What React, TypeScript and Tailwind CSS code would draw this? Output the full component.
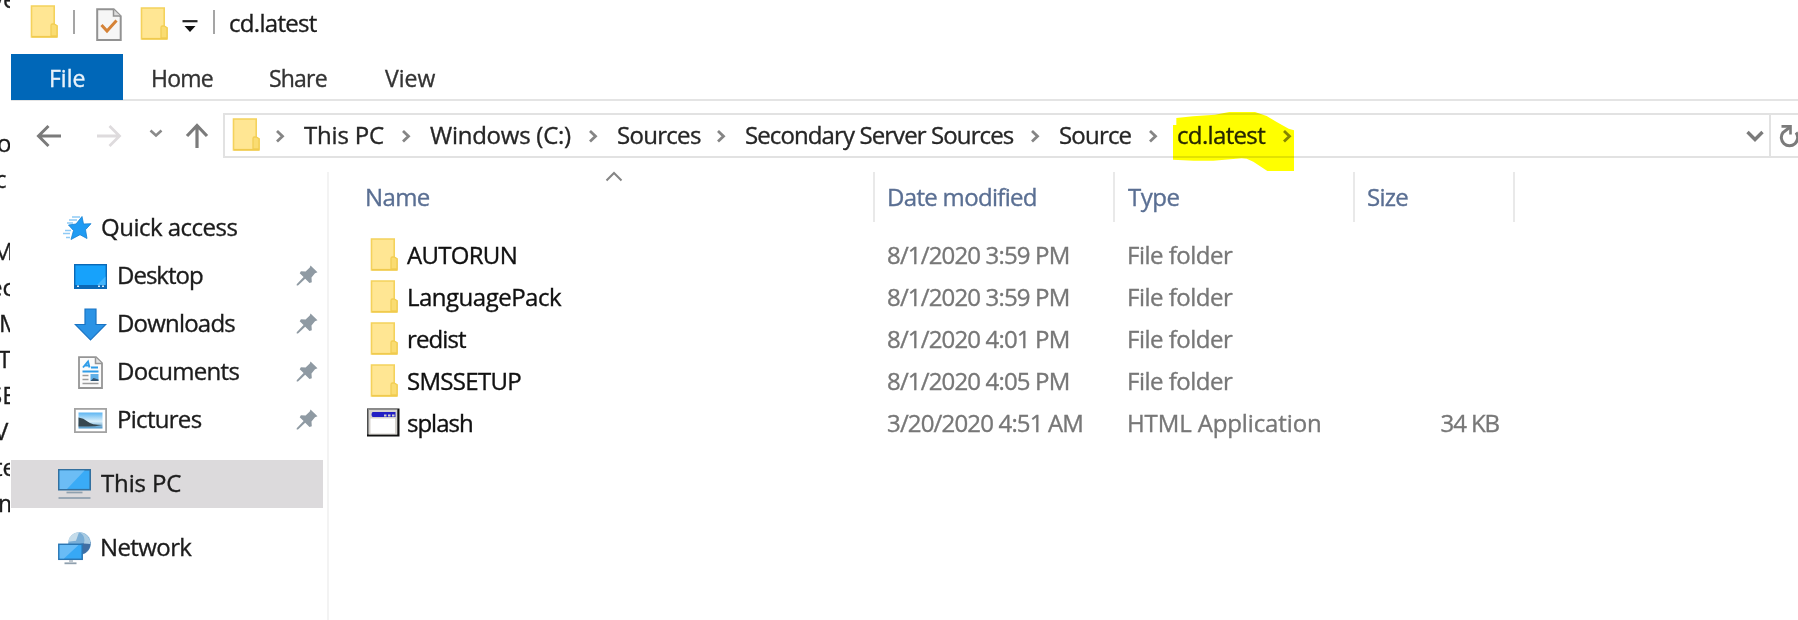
import React from 'react';

interface Crumb {
  label: string;
  className: string;
}

interface FileRow {
  name: string;
  nameClass: string;
  date: string;
  dateClass: string;
  type: string;
  typeClass: string;
  size?: string;
  folder: boolean;
}

const crumbs: Crumb[] = [
  { label: 'This PC', className: 'w-[98px] tracking-[-0.2px]' },
  { label: 'Windows (C:)', className: 'w-[159px] tracking-[-0.25px]' },
  { label: 'Sources', className: 'w-[100px] tracking-[-0.7px]' },
  { label: 'Secondary Server Sources', className: 'w-[286px] tracking-[-0.9px]' },
  { label: 'Source', className: 'w-[90px] tracking-[-0.8px]' },
];

const files: FileRow[] = [
  { name: 'AUTORUN', nameClass: 'tracking-[-0.7px]', date: '8/1/2020 3:59 PM', dateClass: 'tracking-[-0.84px]', type: 'File folder', typeClass: 'tracking-[-0.5px]', folder: true },
  { name: 'LanguagePack', nameClass: 'tracking-[-0.5px]', date: '8/1/2020 3:59 PM', dateClass: 'tracking-[-0.84px]', type: 'File folder', typeClass: 'tracking-[-0.5px]', folder: true },
  { name: 'redist', nameClass: 'tracking-[-0.9px]', date: '8/1/2020 4:01 PM', dateClass: 'tracking-[-0.84px]', type: 'File folder', typeClass: 'tracking-[-0.5px]', folder: true },
  { name: 'SMSSETUP', nameClass: 'tracking-[-0.7px]', date: '8/1/2020 4:05 PM', dateClass: 'tracking-[-0.84px]', type: 'File folder', typeClass: 'tracking-[-0.5px]', folder: true },
  { name: 'splash', nameClass: 'tracking-[-1px]', date: '3/20/2020 4:51 AM', dateClass: 'tracking-[-0.84px]', type: 'HTML Application', typeClass: 'tracking-[-0.12px]', size: '34 KB', folder: false },
];

// Letters of the window that lies behind, cut off by the explorer's edge
const behind = [
  { text: 've', className: '-ml-[9px]' },
  { text: '', className: '' },
  { text: '', className: '' },
  { text: '', className: '' },
  { text: 'o', className: '-ml-[3px]' },
  { text: 'c', className: '-ml-[5px]' },
  { text: '', className: '' },
  { text: 'M', className: '-ml-[8px]' },
  { text: 'ec', className: '-ml-[11px]' },
  { text: 'M', className: '-ml-[1px]' },
  { text: 'T', className: '-ml-[2px]' },
  { text: 'SE', className: '-ml-[11px]' },
  { text: 'V', className: '-ml-[6px]' },
  { text: 'te', className: '-ml-[6px]' },
  { text: 'm', className: '-ml-[2px]' },
];

const FolderIcon = () => (
  <svg width="28" height="33" viewBox="0 0 28 33" className="shrink-0">
    <path d="M1.5 1h22.7v18.5l2.8 1.5v11H1.5z" fill="#ffe693" stroke="#f4d25c" strokeWidth="1.6" />
    <path d="M21 31V20.500q0-1.500 1.500-1.500h1.700l2.800 1.800V31z" fill="#fadc72" stroke="#f2ce55" strokeWidth="1.300" />
    <path d="M2 31.700h25" stroke="#f0ca4e" strokeWidth="1.600" />
  </svg>
);

const WindowIcon = () => (
  <svg width="33" height="29" viewBox="0 0 33 29" className="shrink-0">
    <rect x="0" y="0.500" width="32.500" height="28" fill="#111" />
    <rect x="0.500" y="0.500" width="30" height="26" fill="#8c8c8c" />
    <rect x="2" y="2" width="28" height="24.500" fill="#d6d3ce" />
    <path d="M5.500 4h23v5h-23q-2-2.500 0-5z" fill="#2320c4" />
    <path d="M17 7.500h2.500M21 7.500h2.500M25 7.500h2.500" stroke="#d6d3ce" strokeWidth="2" />
    <rect x="3.500" y="10.500" width="24.500" height="15" fill="#fff" />
  </svg>
);

const Chevron = () => (
  <svg width="28" height="16" viewBox="0 0 28 16" className="shrink-0">
    <path d="M1 3l5.500 5.200L1 13.400" fill="none" stroke="#858585" strokeWidth="2.800" />
  </svg>
);

const Pin = () => (
  <svg width="22" height="22" viewBox="0 0 22 22" className="shrink-0">
    <path d="M14.500 0.500l7 6.800-2.500 1-3.500 4.200 0.300 4.700-2.300 0.800-4.300-4.300-7.200 6.800H0.700v-1.200l6.900-7.200-3.900-3.800 1.200-2 4.700 0.100 4.200-3.900z" fill="#8f9aa3" />
  </svg>
);

const StarIcon = () => (
  <svg width="30" height="26" viewBox="0 0 30 26" className="shrink-0">
    <path d="M10 2h8M7 5h8M5 8h6M3 15.500h6M1 18.500h7M4 22.500h4" stroke="#8fcaf5" strokeWidth="1.500" />
    <path d="M20 1.500l1.500 7.500 7.500-0.300-5.500 6 1.500 8.800-7-3.800-9 4.800 2.500-9L6.500 10l7.500-1z" fill="#1f9bf3" stroke="#1580d3" strokeWidth="0.800" />
  </svg>
);

const DesktopIcon = () => (
  <svg width="33" height="25" viewBox="0 0 33 25" className="shrink-0">
    <rect x="0.700" y="0.700" width="31.600" height="23.600" fill="#17a2fb" stroke="#0b69b7" strokeWidth="1.400" />
    <path d="M23 21l8.500-8.500V21z" fill="#43b4fb" />
    <rect x="1" y="21" width="31" height="3" fill="#0c68b4" />
    <path d="M3 22.300h2M24 22.300h2M28 22.300h2" stroke="#d6ecfb" strokeWidth="1.400" />
  </svg>
);

const DownloadIcon = () => (
  <svg width="33" height="33" viewBox="0 0 33 33" className="shrink-0">
    <path d="M11 1h11v15.500h9.700L16.500 31.800 1.300 16.500H11z" fill="#2b93e5" stroke="#1a74c4" strokeWidth="1.200" />
  </svg>
);

const DocumentIcon = () => (
  <svg width="33" height="33" viewBox="0 0 33 33" className="shrink-0">
    <path d="M5 1.200h17l6 6V32H5z" fill="#fbfbfb" stroke="#959595" strokeWidth="1.800" />
    <path d="M21.500 1.500v6H28" fill="#e4e4e4" stroke="#959595" strokeWidth="1.500" />
    <path d="M9 11.500l5-6 1.500 6M10.500 9.500h5M17 11.500h7M8.500 15.500h16" fill="none" stroke="#2e9ce8" strokeWidth="1.900" />
    <path d="M8.500 19.500h6M8.500 23.500h6M8.500 27.500h16" stroke="#9b9b9b" strokeWidth="1.500" />
    <rect x="16.500" y="18" width="8" height="7" fill="#60b0e8" />
    <path d="M16.500 25l3-3 5 1.500V25z" fill="#33536e" />
  </svg>
);

const PictureIcon = () => (
  <svg width="33" height="25" viewBox="0 0 33 25" className="shrink-0">
    <defs>
      <linearGradient id="sky" x1="0" y1="0" x2="0" y2="1">
        <stop offset="0" stopColor="#5db5f2" />
        <stop offset="0.550" stopColor="#d9effa" />
        <stop offset="1" stopColor="#4a93c6" />
      </linearGradient>
    </defs>
    <rect x="0.900" y="0.900" width="31.200" height="23.200" fill="#fff" stroke="#a3a3a3" strokeWidth="1.800" />
    <rect x="4.500" y="4.500" width="24" height="16" fill="url(#sky)" />
    <path d="M4.500 9.500q5 0.500 9 4t15 3.500q-8 1.500-14 1.500h-10z" fill="#37474f" />
  </svg>
);

const PcIcon = () => (
  <svg width="33" height="31" viewBox="0 0 33 31" className="shrink-0">
    <rect x="0.800" y="0.800" width="31.400" height="19.900" fill="#3aabf6" stroke="#33709f" strokeWidth="1.600" />
    <path d="M1.600 1.600h25L9 20H1.600z" fill="#6cbdf5" />
    <path d="M8.500 23.500h16" stroke="#8fa0ae" strokeWidth="1.700" />
    <path d="M0.500 29h32" stroke="#9aa8b5" strokeWidth="2.200" />
  </svg>
);

const NetworkIcon = () => (
  <svg width="33" height="34" viewBox="0 0 33 34" className="shrink-0">
    <circle cx="21.500" cy="12.500" r="11.300" fill="#7aaed6" />
    <path d="M21 1.200a11.300 11.300 0 0 0-11 9.500l8-1z" fill="#c5dcea" />
    <path d="M22 13l10.500-2a11.300 11.300 0 0 1-9 12.500z" fill="#3f6ea3" />
    <path d="M22 1.500q6 4 4 11l6.500 0.500a11.300 11.300 0 0 0-10.500-11.500z" fill="#a9cbe2" />
    <rect x="0.800" y="13.300" width="23.400" height="15" fill="#37a8f5" stroke="#2a76b3" strokeWidth="1.500" />
    <path d="M1.600 14h19L6 27.500H1.600z" fill="#69bcf6" />
    <path d="M6.500 32.300h12" stroke="#8fa0ae" strokeWidth="1.800" />
    <path d="M11 30h4" stroke="#a9b6c1" strokeWidth="1.500" />
  </svg>
);

const quickItems = [
  { label: 'Desktop', className: 'tracking-[-1px]', icon: <DesktopIcon /> },
  { label: 'Downloads', className: 'tracking-[-0.8px]', icon: <DownloadIcon /> },
  { label: 'Documents', className: 'tracking-[-0.7px]', icon: <DocumentIcon /> },
  { label: 'Pictures', className: 'tracking-[-0.7px]', icon: <PictureIcon /> },
];

const TitleBar = () => (
  <div className="flex h-[54px] items-start">
    <div className="ml-[19px] mt-[5px]"><FolderIcon /></div>
    <div className="ml-[15px] mt-[10px] h-6 w-[2px] bg-[#a5a5a5]" />
    <svg width="26" height="33" viewBox="0 0 26 33" className="ml-[21px] mt-2">
      <path d="M1.200 1.200h16.500l7 7V32H1.200z" fill="#f6f6f6" stroke="#929292" strokeWidth="2" />
      <path d="M17.500 1.500v6.500h7" fill="#ddd" stroke="#929292" strokeWidth="1.500" />
      <path d="M5.500 17l5.500 6L20.500 12.500" fill="none" stroke="#d58338" strokeWidth="3" />
    </svg>
    <div className="ml-[18px] mt-[7px]"><FolderIcon /></div>
    <svg width="16" height="14" viewBox="0 0 16 14" className="ml-[14px] mt-[19px]">
      <path d="M0.500 2.200h15" stroke="#222" strokeWidth="2.200" />
      <path d="M2.500 7h11L8 13z" fill="#111" />
    </svg>
    <div className="ml-[15px] mt-[10px] h-6 w-[2px] bg-[#a5a5a5]" />
    <span className="ml-[14px] mt-[5px] leading-9 tracking-[-0.7px]">cd.latest</span>
  </div>
);

const Tabs = () => (
  <div className="flex h-[47px] border-b-2 border-[#e4e4e4] text-[23px] leading-[48px] text-[#333]">
    <div className="-mb-px h-[46px] w-28 bg-[#0067b8] pl-[38px] text-[#e8f2fa]">File</div>
    <div className="w-[119px] pl-[28px] tracking-[-0.8px]">Home</div>
    <div className="w-[116px] pl-[27px] tracking-[-0.8px]">Share</div>
    <div className="pl-[27px]">View</div>
  </div>
);

const AddressBar = () => (
  <div className="mt-[12px] flex h-[45px] items-center">
    <svg width="26" height="24" viewBox="0 0 26 24" className="ml-[25px]">
      <path d="M25 12H3M12.500 2L2.500 12l10 10" fill="none" stroke="#7b7b7b" strokeWidth="3" />
    </svg>
    <svg width="26" height="24" viewBox="0 0 26 24" className="ml-[34px]">
      <path d="M1 12h22M13.500 2l10 10-10 10" fill="none" stroke="#dedbdd" strokeWidth="2.800" />
    </svg>
    <svg width="14" height="9" viewBox="0 0 14 9" className="ml-[27px] -mt-1">
      <path d="M1.500 1.500L7 6.500l5.500-5" fill="none" stroke="#8a8a8a" strokeWidth="2.600" />
    </svg>
    <svg width="24" height="26" viewBox="0 0 24 26" className="ml-[22px]">
      <path d="M12 25V3M2 13L12 2.500 22 13" fill="none" stroke="#7b7b7b" strokeWidth="3.200" />
    </svg>
    <div className="ml-[14px] flex h-[45px] flex-1 items-center border-y-2 border-l-2 border-[#e2e2e2] text-[#262626]">
      <div className="-mt-[3px] ml-[7px]"><FolderIcon /></div>
      <div className="ml-4 mt-px"><Chevron /></div>
      {crumbs.map((c) => (
        <React.Fragment key={c.label}>
          <span className={`-mt-px shrink-0 whitespace-nowrap ${c.className}`}>{c.label}</span>
          <div className="mt-px"><Chevron /></div>
        </React.Fragment>
      ))}
      <div className="relative flex items-center">
        <span className="-mt-px w-[106px] tracking-[-0.65px]">cd.latest</span>
        <div className="mt-px"><Chevron /></div>
        {/* Marker stroke over the current folder */}
        <svg width="121" height="59" viewBox="0 0 363 177" className="absolute -left-[4px] -top-[8px] mix-blend-multiply">
          <path d="M0 39h10V18l50-5 66-5 43-8h77l35 12 30 18 36 20 16 5v122h-80l-42-28-20-9-15-1-85 7H62L0 143z" fill="#ffff00" />
        </svg>
      </div>
      <div className="flex-1" />
      <svg width="18" height="13" viewBox="0 0 18 13" className="mr-[5px] mt-[2px]">
        <path d="M1.500 2L9 9.500 16.500 2" fill="none" stroke="#7b7b7b" strokeWidth="3.400" />
      </svg>
      <div className="flex h-full w-[29px] items-center overflow-hidden border-l-2 border-[#e2e2e2] pl-2">
        <svg width="22" height="24" viewBox="0 0 22 24" className="shrink-0">
          <path d="M17 8.500A8.200 8.200 0 1 1 4 8.500L10.500 3.500" fill="none" stroke="#7b7b7b" strokeWidth="3" />
          <path d="M2.500 2.400h9v8.200" fill="none" stroke="#7b7b7b" strokeWidth="2.600" />
        </svg>
      </div>
    </div>
  </div>
);

const Sidebar = () => (
  <div className="w-[318px] shrink-0 border-r-2 border-[#f3f3f3] pt-8">
    <div className="flex h-12 items-center pl-[51px]">
      <StarIcon />
      <span className="-mt-[2px] ml-[9px] tracking-[-0.5px]">Quick access</span>
    </div>
    {quickItems.map((item) => (
      <div key={item.label} className="flex h-12 items-center pl-[63px]">
        {item.icon}
        <span className={`-mt-[2px] ml-[10px] flex-1 ${item.className}`}>{item.label}</span>
        <div className="mr-[9px]"><Pin /></div>
      </div>
    ))}
    <div className="mt-4 flex h-12 w-[312px] items-center bg-[#dcdadc] pl-[47px]">
      <PcIcon />
      <span className="-mt-[2px] ml-[10px] tracking-[-0.15px]">This PC</span>
    </div>
    <div className="mt-4 flex h-12 items-center pl-[47px]">
      <NetworkIcon />
      <span className="-mt-[2px] ml-[9px] tracking-[-0.6px]">Network</span>
    </div>
  </div>
);

const FileList = () => (
  <div className="flex-1">
    <div className="relative flex h-[50px] items-center text-[#5a6f93]">
      <div className="h-full w-[546px] border-r-2 border-[#e9e9e9] pl-[36px] leading-[50px] tracking-[-0.6px]">Name</div>
      <div className="h-full w-[240px] border-r-2 border-[#e9e9e9] pl-[12px] leading-[50px] tracking-[-0.68px]">Date modified</div>
      <div className="h-full w-[240px] border-r-2 border-[#e9e9e9] pl-[13px] leading-[50px] tracking-[-0.5px]">Type</div>
      <div className="h-full w-[160px] border-r-2 border-[#e9e9e9] pl-3 leading-[50px] tracking-[-0.7px]">Size</div>
      <svg width="18" height="11" viewBox="0 0 18 11" className="absolute left-[276px] top-[-1px]">
        <path d="M1.500 9.500L9 2l7.500 7.500" fill="none" stroke="#858585" strokeWidth="2" />
      </svg>
    </div>
    <div className="pt-3">
      {files.map((f) => (
        <div key={f.name} className="flex h-[42px] items-center text-[#777]">
          <div className="-mt-[2px] flex w-[78px] shrink-0 pl-[38px]">
            {f.folder ? <div className="pl-[3px]"><FolderIcon /></div> : <WindowIcon />}
          </div>
          <span className={`w-[480px] text-[#111] ${f.nameClass}`}>{f.name}</span>
          <span className={`w-[240px] whitespace-nowrap ${f.dateClass}`}>{f.date}</span>
          <span className={`w-[240px] whitespace-nowrap ${f.typeClass}`}>{f.type}</span>
          <span className="w-[132px] text-right tracking-[-1.1px]">{f.size}</span>
        </div>
      ))}
    </div>
  </div>
);

export default function App() {
  return (
    <div className="flex h-[620px] w-[1798px] overflow-hidden bg-white font-['Open_Sans','Noto_Sans',sans-serif] text-2xl text-[#1c1c1c] [-webkit-text-stroke:0.35px]">
      <div className="w-[10px] shrink-0 overflow-hidden">
        <div className="-mt-[19px]">
          {behind.map((b, i) => (
            <div key={i} className={`h-9 whitespace-nowrap leading-9 ${b.className}`}>{b.text}</div>
          ))}
        </div>
      </div>
      <div className="ml-px flex flex-1 flex-col">
        <TitleBar />
        <Tabs />
        <AddressBar />
        <div className="mt-[14px] flex flex-1">
          <Sidebar />
          <FileList />
        </div>
      </div>
    </div>
  );
}
